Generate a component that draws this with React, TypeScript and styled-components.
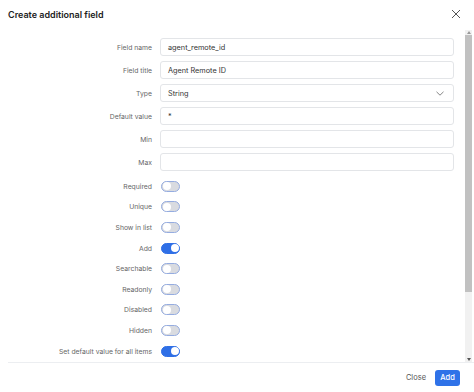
import React from "react";
import styled, { createGlobalStyle } from "styled-components";

const Global = createGlobalStyle`
  html, body { margin: 0; padding: 0; background: #fff; }
  body { font-family: Inter, "Noto Sans", sans-serif; color: #333; }
  * { box-sizing: border-box; }
`;

const Modal = styled.div`
  width: 474px;
  height: 392px;
  display: flex;
  flex-direction: column;
  background: #fff;
  overflow: hidden;
`;

const Header = styled.div`
  height: 30px;
  flex: none;
  display: flex;
  align-items: center;
  justify-content: space-between;
  padding: 0 12px 2px 8px;
`;

const Title = styled.h1`
  margin: 0;
  font-size: 9px;
  font-weight: 600;
  color: #222;
`;

const CloseX = styled.button`
  border: 0;
  background: none;
  padding: 0;
  width: 12px;
  height: 12px;
  display: flex;
  align-items: center;
  justify-content: center;
`;

const Body = styled.div`
  flex: 1;
  min-height: 0;
  display: flex;
  padding-right: 2px;
`;

const Content = styled.div`
  flex: 1;
  overflow: hidden;
  padding: 8px 11px 0 0;
`;

const ScrollTrack = styled.div`
  width: 7px;
  flex: none;
  background: #f1f1f1;
  display: flex;
  flex-direction: column;
  align-items: stretch;
`;

const ScrollArrow = styled.div`
  height: 5px;
  flex: none;
  display: flex;
  align-items: center;
  justify-content: center;
`;

const ScrollThumb = styled.div`
  height: 257px;
  flex: none;
  background: #c1c1c1;
`;

const ScrollRest = styled.div`
  flex: 1;
`;

const Row = styled.div<{ $toggle?: boolean }>`
  display: grid;
  grid-template-columns: 152px 1fr;
  column-gap: 8px;
  align-items: center;
  height: ${(p) => (p.$toggle ? "20.6px" : "23px")};
  padding-bottom: ${(p) => (p.$toggle ? "0" : "5px")};
`;

const Label = styled.label`
  text-align: right;
  font-size: 6.8px;
  color: #666;
  white-space: nowrap;
`;

const Input = styled.div`
  height: 18px;
  border: 1px solid #e3e5e8;
  border-radius: 3px;
  display: flex;
  align-items: center;
  justify-content: space-between;
  padding: 0 9px 0 7px;
  font-size: 7.3px;
  color: #333;
`;

const Toggle = styled.span<{ $on?: boolean }>`
  position: relative;
  width: 19px;
  height: 11px;
  border-radius: 6px;
  margin-left: 1px;
  background: ${(p) => (p.$on ? "#2f6fe6" : "#d9dbe0")};
  border: 1px solid ${(p) => (p.$on ? "#2f6fe6" : "#95ace0")};
  &::after {
    content: "";
    position: absolute;
    top: 0.5px;
    left: ${(p) => (p.$on ? "8.5px" : "0.5px")};
    width: 8px;
    height: 8px;
    border-radius: 50%;
    background: #fff;
  }
`;

const Footer = styled.div`
  height: 30px;
  flex: none;
  border-top: 1px solid #eceef1;
  margin-left: 8px;
  display: flex;
  align-items: center;
  justify-content: flex-end;
  gap: 9px;
  padding-right: 14px;
`;

const TextButton = styled.button`
  border: 0;
  background: none;
  font-family: inherit;
  font-size: 7.5px;
  color: #555;
  padding: 0;
`;

const PrimaryButton = styled.button`
  border: 0;
  border-radius: 3px;
  background: #2f72e8;
  color: #fff;
  font-family: inherit;
  font-size: 7.5px;
  font-weight: 500;
  width: 25px;
  height: 16px;
  padding: 0;
`;

const inputs: [string, string, boolean?][] = [
  ["Field name", "agent_remote_id"],
  ["Field title", "Agent Remote ID"],
  ["Type", "String", true],
  ["Default value", "*"],
  ["Min", ""],
  ["Max", ""],
];

const toggles: [string, boolean][] = [
  ["Required", false],
  ["Unique", false],
  ["Show in list", false],
  ["Add", true],
  ["Searchable", false],
  ["Readonly", false],
  ["Disabled", false],
  ["Hidden", false],
  ["Set default value for all items", true],
];

export default function App() {
  return (
    <>
      <Global />
      <Modal>
        <Header>
          <Title>Create additional field</Title>
          <CloseX aria-label="close">
            <svg width="10" height="10" viewBox="0 0 10 10">
              <path d="M1 1L9 9M9 1L1 9" stroke="#555" strokeWidth="1" fill="none" />
            </svg>
          </CloseX>
        </Header>
        <Body>
          <Content>
            {inputs.map(([l, v, sel]) => (
              <Row key={l}>
                <Label>{l}</Label>
                <Input>
                  <span>{v}</span>
                  {sel && (
                    <svg width="8" height="5" viewBox="0 0 8 5">
                      <path d="M0.5 0.8L4 4.2L7.5 0.8" stroke="#777" strokeWidth="0.9" fill="none" />
                    </svg>
                  )}
                </Input>
              </Row>
            ))}
            {toggles.map(([l, on]) => (
              <Row key={l} $toggle>
                <Label>{l}</Label>
                <Toggle $on={on} />
              </Row>
            ))}
          </Content>
          <ScrollTrack>
            <ScrollArrow>
              <svg width="4" height="3" viewBox="0 0 4 3">
                <path d="M0 3L2 0L4 3Z" fill="#999" />
              </svg>
            </ScrollArrow>
            <ScrollThumb />
            <ScrollRest />
            <ScrollArrow>
              <svg width="4" height="3" viewBox="0 0 4 3">
                <path d="M0 0L4 0L2 3Z" fill="#555" />
              </svg>
            </ScrollArrow>
          </ScrollTrack>
        </Body>
        <Footer>
          <TextButton>Close</TextButton>
          <PrimaryButton>Add</PrimaryButton>
        </Footer>
      </Modal>
    </>
  );
}
